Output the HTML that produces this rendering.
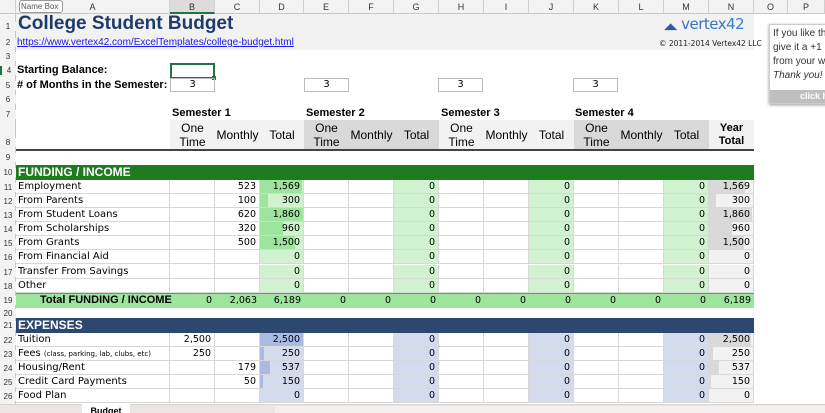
<!DOCTYPE html>
<html><head><meta charset="utf-8"><style>
*{margin:0;padding:0;box-sizing:border-box}
body{width:825px;height:413px;overflow:hidden;background:#fff;position:relative;font-family:"DejaVu Sans",sans-serif}
.a{position:absolute;white-space:nowrap}
.ch{position:absolute;top:0;height:14px;border-right:1px solid #d0d0d0;border-bottom:1px solid #c8c8c8;background:#f3f3f3;font:9px "Liberation Sans",sans-serif;color:#333;text-align:center;line-height:14px}
.rh{position:absolute;left:0;width:16px;font:8px "Liberation Sans",sans-serif;color:#333;text-align:center;background:#f3f3f3}
.r{position:absolute;left:0;width:825px;height:14px}
.r>span{position:absolute;top:0;height:14px;line-height:13px;font-size:9.5px;text-align:right;padding-right:3px;border-right:1px solid #d8d8d8;border-bottom:1px solid #d8d8d8;color:#000;white-space:nowrap}
.r>span.l{text-align:left;padding-left:2px;font-size:10px}
.g{background:#d0f2d0}.n{background:#f2f2f2}.b{background:#d3dcef}
.bar{position:absolute;left:0;top:0;height:13px}
.r>span i{position:relative;font-style:normal}
.hd{position:absolute;font:12px "Liberation Sans",sans-serif;color:#000;text-align:center;line-height:14px}
</style></head><body>
<div class="ch" style="left:0;width:16px"></div>
<div class="ch" style="left:16px;width:154px">A</div>
<div class="a" style="left:19px;top:0;width:44px;height:13px;border:1px solid #999;border-radius:3px;background:#fff;font:8px 'Liberation Sans',sans-serif;color:#555;line-height:11px;padding-left:1px;overflow:hidden">Name Box</div>
<div class="ch" style="left:170px;width:45px;background:#dcdcdc;border-bottom:2px solid #217346">B</div>
<div class="ch" style="left:215px;width:45px">C</div>
<div class="ch" style="left:260px;width:44px">D</div>
<div class="ch" style="left:304px;width:45px">E</div>
<div class="ch" style="left:349px;width:45px">F</div>
<div class="ch" style="left:394px;width:45px">G</div>
<div class="ch" style="left:439px;width:45px">H</div>
<div class="ch" style="left:484px;width:45px">I</div>
<div class="ch" style="left:529px;width:45px">J</div>
<div class="ch" style="left:574px;width:45px">K</div>
<div class="ch" style="left:619px;width:45px">L</div>
<div class="ch" style="left:664px;width:45px">M</div>
<div class="ch" style="left:709px;width:45px">N</div>
<div class="ch" style="left:754px;width:34px">O</div>
<div class="ch" style="left:788px;width:37px">P</div>
<div class="a" style="left:0;top:14px;width:16px;height:390px;background:#f3f3f3;border-right:1px solid #c8c8c8"></div>
<div class="rh" style="top:22px">1</div><div class="rh" style="top:38px">2</div><div class="rh" style="top:52px">3</div>
<div class="rh" style="top:66px;border-left:2px solid #217346">4</div><div class="rh" style="top:81px">5</div><div class="rh" style="top:95px">6</div>
<div class="rh" style="top:110px">7</div><div class="rh" style="top:138px">8</div><div class="rh" style="top:153px">9</div>
<div class="rh" style="top:168px">10</div><div class="rh" style="top:183px">11</div><div class="rh" style="top:197px">12</div>
<div class="rh" style="top:211px">13</div><div class="rh" style="top:225px">14</div><div class="rh" style="top:239px">15</div>
<div class="rh" style="top:253px">16</div><div class="rh" style="top:268px">17</div><div class="rh" style="top:282px">18</div>
<div class="rh" style="top:296px">19</div><div class="rh" style="top:309px">20</div><div class="rh" style="top:321px">21</div>
<div class="rh" style="top:336px">22</div><div class="rh" style="top:350px">23</div><div class="rh" style="top:364px">24</div>
<div class="rh" style="top:378px">25</div><div class="rh" style="top:392px">26</div>
<div class="a" style="left:16px;top:14px;width:738px;height:36px;background:#f2f2f2"></div>
<div class="a" style="left:18px;top:13px;font:bold 19px 'Liberation Sans',sans-serif;color:#1f3b6b">College Student Budget</div>
<div class="a" style="left:17px;top:37px;font:10px 'Liberation Sans',sans-serif;color:#1a1aee;text-decoration:underline">https://www.vertex42.com/ExcelTemplates/college-budget.html</div>
<div class="a" style="left:664px;top:15px;font:15px 'DejaVu Sans',sans-serif;color:#3a73c0;letter-spacing:-0.5px"><span style="color:#2a5ea8;font-size:9px">◢◣</span> vertex<span style="color:#3a80d0">42</span></div>
<div class="a" style="left:659px;top:39px;font:7.5px 'DejaVu Sans',sans-serif;color:#222">© 2011-2014 Vertex42 LLC</div>
<div class="a" style="left:769px;top:24px;width:60px;height:80px;background:#fff;border:1px solid #ccc;box-shadow:0 1px 3px #999"></div>
<div class="a" style="left:773px;top:27px;font:10px 'Liberation Sans',sans-serif;color:#333;line-height:14px">If you like th<br>give it a +1<br>from your w<br><i>Thank you!</i></div>
<div class="a" style="left:770px;top:90px;width:60px;height:13px;background:#bfbfbf;font:bold 9px 'Liberation Sans',sans-serif;color:#fff;line-height:13px;padding-left:30px">click h</div>
<div class="a" style="left:17px;top:64px;font:bold 11px 'Liberation Sans',sans-serif">Starting Balance:</div>
<div class="a" style="left:17px;top:79px;font:bold 11px 'Liberation Sans',sans-serif"># of Months in the Semester:</div>
<div class="a" style="left:170px;top:63px;width:45px;height:16px;border:2px solid #217346"></div>
<div class="a" style="left:212px;top:76px;width:4px;height:4px;background:#217346"></div>
<div class="a" style="left:170px;top:78px;width:45px;height:14px;border:1px solid #bbb;font:10px 'DejaVu Sans',sans-serif;text-align:center;line-height:12px">3</div>
<div class="a" style="left:304px;top:78px;width:45px;height:14px;border:1px solid #bbb;font:10px 'DejaVu Sans',sans-serif;text-align:center;line-height:12px">3</div>
<div class="a" style="left:438px;top:78px;width:45px;height:14px;border:1px solid #bbb;font:10px 'DejaVu Sans',sans-serif;text-align:center;line-height:12px">3</div>
<div class="a" style="left:573px;top:78px;width:45px;height:14px;border:1px solid #bbb;font:10px 'DejaVu Sans',sans-serif;text-align:center;line-height:12px">3</div>
<div class="a" style="left:172px;top:107px;font:bold 11px 'Liberation Sans',sans-serif">Semester 1</div>
<div class="a" style="left:306px;top:107px;font:bold 11px 'Liberation Sans',sans-serif">Semester 2</div>
<div class="a" style="left:441px;top:107px;font:bold 11px 'Liberation Sans',sans-serif">Semester 3</div>
<div class="a" style="left:575px;top:107px;font:bold 11px 'Liberation Sans',sans-serif">Semester 4</div>
<div class="a" style="left:170px;top:120px;width:134px;height:30px;background:#f2f2f2"></div>
<div class="a" style="left:304px;top:120px;width:135px;height:30px;background:#d9d9d9"></div>
<div class="a" style="left:439px;top:120px;width:135px;height:30px;background:#f2f2f2"></div>
<div class="a" style="left:574px;top:120px;width:135px;height:30px;background:#d9d9d9"></div>
<div class="a" style="left:709px;top:120px;width:45px;height:30px;background:#f2f2f2"></div>
<div class="hd" style="left:170px;top:121px;width:45px">One<br>Time</div><div class="hd" style="left:215px;top:128px;width:45px">Monthly</div><div class="hd" style="left:260px;top:128px;width:44px">Total</div>
<div class="hd" style="left:304px;top:121px;width:45px">One<br>Time</div><div class="hd" style="left:349px;top:128px;width:45px">Monthly</div><div class="hd" style="left:394px;top:128px;width:45px">Total</div>
<div class="hd" style="left:439px;top:121px;width:45px">One<br>Time</div><div class="hd" style="left:484px;top:128px;width:45px">Monthly</div><div class="hd" style="left:529px;top:128px;width:45px">Total</div>
<div class="hd" style="left:574px;top:121px;width:45px">One<br>Time</div><div class="hd" style="left:619px;top:128px;width:45px">Monthly</div><div class="hd" style="left:664px;top:128px;width:45px">Total</div>
<div class="hd" style="left:709px;top:122px;width:45px;font-weight:bold;font-size:11px;line-height:13px">Year<br>Total</div>
<div class="a" style="left:16px;top:149px;width:738px;height:2px;background:#444"></div>
<div class="a" style="left:16px;top:165px;width:738px;height:15px;background:#1e7b1e;color:#fff;font:bold 12px 'Liberation Sans',sans-serif;line-height:15px;padding-left:2px">FUNDING / INCOME</div>

<div class="r" style="top:180px"><span class="l" style="left:16px;width:154px">Employment</span><span style="left:170px;width:45px"></span><span style="left:215px;width:45px">523</span><span class="g" style="left:260px;width:44px"><b class="bar" style="width:42px;background:#9de59d"></b><i>1,569</i></span><span style="left:304px;width:45px"></span><span style="left:349px;width:45px"></span><span class="g" style="left:394px;width:45px">0</span><span style="left:439px;width:45px"></span><span style="left:484px;width:45px"></span><span class="g" style="left:529px;width:45px">0</span><span style="left:574px;width:45px"></span><span style="left:619px;width:45px"></span><span class="g" style="left:664px;width:45px">0</span><span class="n" style="left:709px;width:45px"><b class="bar" style="width:36px;background:#d9d9d9"></b><i>1,569</i></span></div>
<div class="r" style="top:194px"><span class="l" style="left:16px;width:154px">From Parents</span><span style="left:170px;width:45px"></span><span style="left:215px;width:45px">100</span><span class="g" style="left:260px;width:44px"><b class="bar" style="width:8px;background:#9de59d"></b><i>300</i></span><span style="left:304px;width:45px"></span><span style="left:349px;width:45px"></span><span class="g" style="left:394px;width:45px">0</span><span style="left:439px;width:45px"></span><span style="left:484px;width:45px"></span><span class="g" style="left:529px;width:45px">0</span><span style="left:574px;width:45px"></span><span style="left:619px;width:45px"></span><span class="g" style="left:664px;width:45px">0</span><span class="n" style="left:709px;width:45px"><b class="bar" style="width:7px;background:#d9d9d9"></b><i>300</i></span></div>
<div class="r" style="top:208px"><span class="l" style="left:16px;width:154px">From Student Loans</span><span style="left:170px;width:45px"></span><span style="left:215px;width:45px">620</span><span class="g" style="left:260px;width:44px"><b class="bar" style="width:43px;background:#9de59d"></b><i>1,860</i></span><span style="left:304px;width:45px"></span><span style="left:349px;width:45px"></span><span class="g" style="left:394px;width:45px">0</span><span style="left:439px;width:45px"></span><span style="left:484px;width:45px"></span><span class="g" style="left:529px;width:45px">0</span><span style="left:574px;width:45px"></span><span style="left:619px;width:45px"></span><span class="g" style="left:664px;width:45px">0</span><span class="n" style="left:709px;width:45px"><b class="bar" style="width:43px;background:#d9d9d9"></b><i>1,860</i></span></div>
<div class="r" style="top:222px"><span class="l" style="left:16px;width:154px">From Scholarships</span><span style="left:170px;width:45px"></span><span style="left:215px;width:45px">320</span><span class="g" style="left:260px;width:44px"><b class="bar" style="width:23px;background:#9de59d"></b><i>960</i></span><span style="left:304px;width:45px"></span><span style="left:349px;width:45px"></span><span class="g" style="left:394px;width:45px">0</span><span style="left:439px;width:45px"></span><span style="left:484px;width:45px"></span><span class="g" style="left:529px;width:45px">0</span><span style="left:574px;width:45px"></span><span style="left:619px;width:45px"></span><span class="g" style="left:664px;width:45px">0</span><span class="n" style="left:709px;width:45px"><b class="bar" style="width:23px;background:#d9d9d9"></b><i>960</i></span></div>
<div class="r" style="top:236px"><span class="l" style="left:16px;width:154px">From Grants</span><span style="left:170px;width:45px"></span><span style="left:215px;width:45px">500</span><span class="g" style="left:260px;width:44px"><b class="bar" style="width:35px;background:#9de59d"></b><i>1,500</i></span><span style="left:304px;width:45px"></span><span style="left:349px;width:45px"></span><span class="g" style="left:394px;width:45px">0</span><span style="left:439px;width:45px"></span><span style="left:484px;width:45px"></span><span class="g" style="left:529px;width:45px">0</span><span style="left:574px;width:45px"></span><span style="left:619px;width:45px"></span><span class="g" style="left:664px;width:45px">0</span><span class="n" style="left:709px;width:45px"><b class="bar" style="width:35px;background:#d9d9d9"></b><i>1,500</i></span></div>
<div class="r" style="top:250px"><span class="l" style="left:16px;width:154px">From Financial Aid</span><span style="left:170px;width:45px"></span><span style="left:215px;width:45px"></span><span class="g" style="left:260px;width:44px">0</span><span style="left:304px;width:45px"></span><span style="left:349px;width:45px"></span><span class="g" style="left:394px;width:45px">0</span><span style="left:439px;width:45px"></span><span style="left:484px;width:45px"></span><span class="g" style="left:529px;width:45px">0</span><span style="left:574px;width:45px"></span><span style="left:619px;width:45px"></span><span class="g" style="left:664px;width:45px">0</span><span class="n" style="left:709px;width:45px">0</span></div>
<div class="r" style="top:265px"><span class="l" style="left:16px;width:154px">Transfer From Savings</span><span style="left:170px;width:45px"></span><span style="left:215px;width:45px"></span><span class="g" style="left:260px;width:44px">0</span><span style="left:304px;width:45px"></span><span style="left:349px;width:45px"></span><span class="g" style="left:394px;width:45px">0</span><span style="left:439px;width:45px"></span><span style="left:484px;width:45px"></span><span class="g" style="left:529px;width:45px">0</span><span style="left:574px;width:45px"></span><span style="left:619px;width:45px"></span><span class="g" style="left:664px;width:45px">0</span><span class="n" style="left:709px;width:45px">0</span></div>
<div class="r" style="top:279px"><span class="l" style="left:16px;width:154px">Other</span><span style="left:170px;width:45px"></span><span style="left:215px;width:45px"></span><span class="g" style="left:260px;width:44px">0</span><span style="left:304px;width:45px"></span><span style="left:349px;width:45px"></span><span class="g" style="left:394px;width:45px">0</span><span style="left:439px;width:45px"></span><span style="left:484px;width:45px"></span><span class="g" style="left:529px;width:45px">0</span><span style="left:574px;width:45px"></span><span style="left:619px;width:45px"></span><span class="g" style="left:664px;width:45px">0</span><span class="n" style="left:709px;width:45px">0</span></div>
<div class="a" style="left:16px;top:293px;width:738px;height:15px;background:#9de59d;border-top:1px solid #5aa55a"></div>
<div class="r" style="top:294px"><span class="l" style="left:16px;width:154px;border:0;font:bold 11px 'Liberation Sans',sans-serif;padding-left:24px">Total FUNDING / INCOME</span><span style="left:170px;width:45px;border:0">0</span><span style="left:215px;width:45px;border:0">2,063</span><span style="left:260px;width:44px;border:0">6,189</span><span style="left:304px;width:45px;border:0">0</span><span style="left:349px;width:45px;border:0">0</span><span style="left:394px;width:45px;border:0">0</span><span style="left:439px;width:45px;border:0">0</span><span style="left:484px;width:45px;border:0">0</span><span style="left:529px;width:45px;border:0">0</span><span style="left:574px;width:45px;border:0">0</span><span style="left:619px;width:45px;border:0">0</span><span style="left:664px;width:45px;border:0">0</span><span style="left:709px;width:45px;border:0">6,189</span></div>
<div class="a" style="left:16px;top:318px;width:738px;height:15px;background:#2c4770;color:#fff;font:bold 12px 'Liberation Sans',sans-serif;line-height:15px;padding-left:2px">EXPENSES</div>
<div class="r" style="top:333px"><span class="l" style="left:16px;width:154px">Tuition</span><span style="left:170px;width:45px">2,500</span><span style="left:215px;width:45px"></span><span class="b" style="left:260px;width:44px"><b class="bar" style="width:43px;background:#a9bbe2"></b><i>2,500</i></span><span style="left:304px;width:45px"></span><span style="left:349px;width:45px"></span><span class="b" style="left:394px;width:45px">0</span><span style="left:439px;width:45px"></span><span style="left:484px;width:45px"></span><span class="b" style="left:529px;width:45px">0</span><span style="left:574px;width:45px"></span><span style="left:619px;width:45px"></span><span class="b" style="left:664px;width:45px">0</span><span class="n" style="left:709px;width:45px"><b class="bar" style="width:42px;background:#d9d9d9"></b><i>2,500</i></span></div>
<div class="r" style="top:347px"><span class="l" style="left:16px;width:154px">Fees <small style="font-size:7px">(class, parking, lab, clubs, etc)</small></span><span style="left:170px;width:45px">250</span><span style="left:215px;width:45px"></span><span class="b" style="left:260px;width:44px"><b class="bar" style="width:4px;background:#a9bbe2"></b><i>250</i></span><span style="left:304px;width:45px"></span><span style="left:349px;width:45px"></span><span class="b" style="left:394px;width:45px">0</span><span style="left:439px;width:45px"></span><span style="left:484px;width:45px"></span><span class="b" style="left:529px;width:45px">0</span><span style="left:574px;width:45px"></span><span style="left:619px;width:45px"></span><span class="b" style="left:664px;width:45px">0</span><span class="n" style="left:709px;width:45px"><b class="bar" style="width:4px;background:#d9d9d9"></b><i>250</i></span></div>
<div class="r" style="top:361px"><span class="l" style="left:16px;width:154px">Housing/Rent</span><span style="left:170px;width:45px"></span><span style="left:215px;width:45px">179</span><span class="b" style="left:260px;width:44px"><b class="bar" style="width:10px;background:#a9bbe2"></b><i>537</i></span><span style="left:304px;width:45px"></span><span style="left:349px;width:45px"></span><span class="b" style="left:394px;width:45px">0</span><span style="left:439px;width:45px"></span><span style="left:484px;width:45px"></span><span class="b" style="left:529px;width:45px">0</span><span style="left:574px;width:45px"></span><span style="left:619px;width:45px"></span><span class="b" style="left:664px;width:45px">0</span><span class="n" style="left:709px;width:45px"><b class="bar" style="width:10px;background:#d9d9d9"></b><i>537</i></span></div>
<div class="r" style="top:375px"><span class="l" style="left:16px;width:154px">Credit Card Payments</span><span style="left:170px;width:45px"></span><span style="left:215px;width:45px">50</span><span class="b" style="left:260px;width:44px"><b class="bar" style="width:3px;background:#a9bbe2"></b><i>150</i></span><span style="left:304px;width:45px"></span><span style="left:349px;width:45px"></span><span class="b" style="left:394px;width:45px">0</span><span style="left:439px;width:45px"></span><span style="left:484px;width:45px"></span><span class="b" style="left:529px;width:45px">0</span><span style="left:574px;width:45px"></span><span style="left:619px;width:45px"></span><span class="b" style="left:664px;width:45px">0</span><span class="n" style="left:709px;width:45px"><b class="bar" style="width:2px;background:#d9d9d9"></b><i>150</i></span></div>
<div class="r" style="top:389px"><span class="l" style="left:16px;width:154px">Food Plan</span><span style="left:170px;width:45px"></span><span style="left:215px;width:45px"></span><span class="b" style="left:260px;width:44px">0</span><span style="left:304px;width:45px"></span><span style="left:349px;width:45px"></span><span class="b" style="left:394px;width:45px">0</span><span style="left:439px;width:45px"></span><span style="left:484px;width:45px"></span><span class="b" style="left:529px;width:45px">0</span><span style="left:574px;width:45px"></span><span style="left:619px;width:45px"></span><span class="b" style="left:664px;width:45px">0</span><span class="n" style="left:709px;width:45px">0</span></div>
<div class="a" style="left:0;top:404px;width:825px;height:9px;background:#ebe6e4;border-top:1px solid #d8d2d0"></div>
<div class="a" style="left:82px;top:404px;width:48px;height:9px;background:#fff;font:bold 9px 'Liberation Sans',sans-serif;text-align:center;line-height:14px;overflow:hidden">Budget</div>
<div class="a" style="left:275px;top:406px;width:550px;height:7px;background:#f4f0ef"></div>
</body></html>
